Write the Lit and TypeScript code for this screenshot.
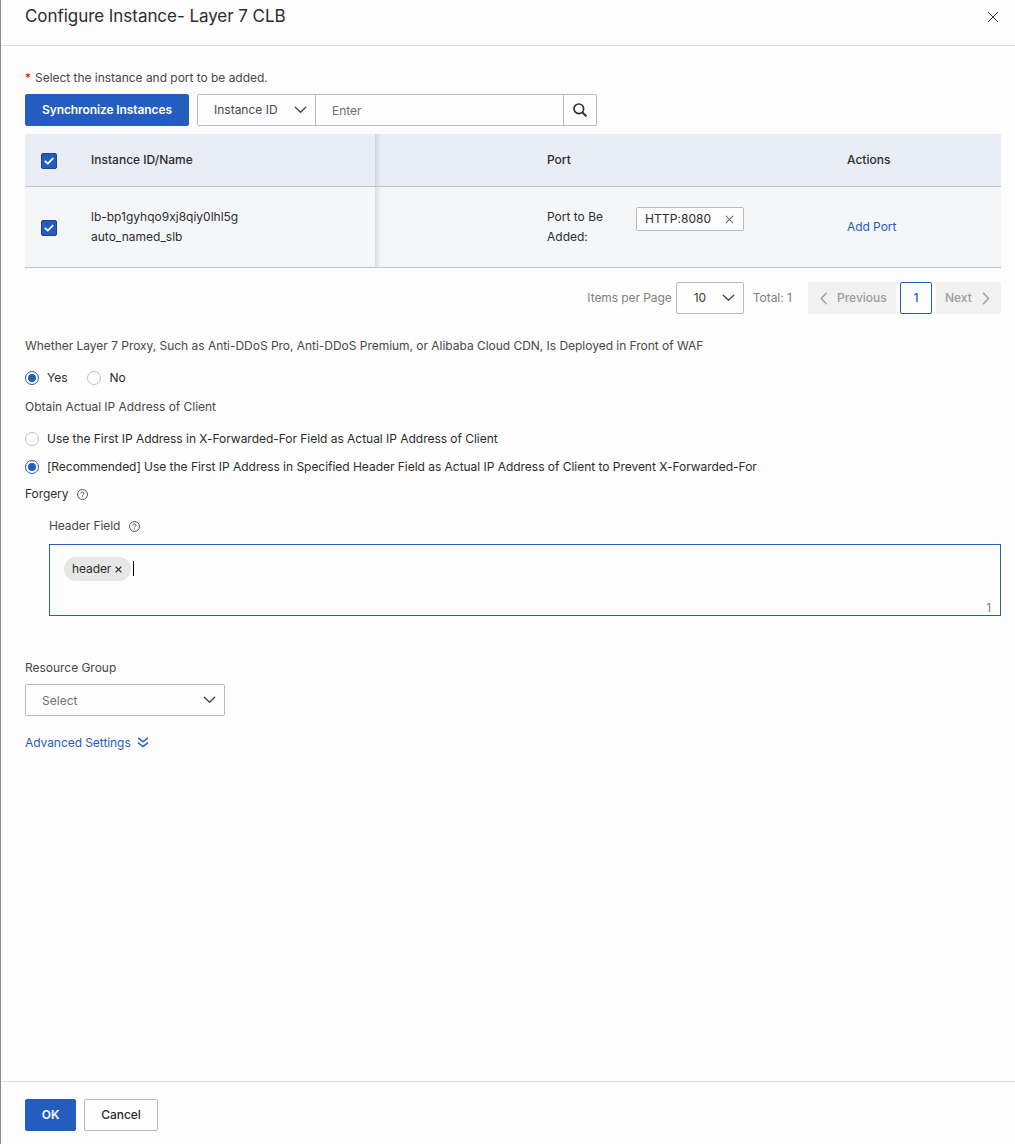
import { LitElement, html, css, svg } from "lit";
import { customElement, property } from "lit/decorators.js";
import { classMap } from "lit/directives/class-map.js";

const chevron = (d: string, w: number, h: number) => html`<svg
  width=${w} height=${h} viewBox="0 0 ${w} ${h}" fill="none"
  stroke="currentColor" stroke-width="1.3" stroke-linecap="round" stroke-linejoin="round"
>${svg`<path d=${d} />`}</svg>`;

const down = () => chevron("M1.3 1.3 6.5 6.3 11.7 1.3", 13, 8);
const left = () => chevron("M6.2 1.3 1.2 6.5 6.2 11.7", 8, 13);
const right = () => chevron("M1.5 1.3 6.5 6.5 1.5 11.7", 8, 13);
const cross = (s: number, w = 1.1) => html`<svg width=${s} height=${s} viewBox="0 0 12 12"
  fill="none" stroke="currentColor" stroke-width=${w}>
  <path d="M1 1 11 11M11 1 1 11" /></svg>`;
const help = () => html`<svg width="11" height="11" viewBox="0 0 11 11" fill="none" stroke="#444" stroke-width=".9">
  <circle cx="5.5" cy="5.5" r="5" />
  <path d="M4 4.5C4 3.5 4.6 3 5.5 3S7 3.5 7 4.3C7 5.3 5.5 5.3 5.5 6.5M5.5 7.3V8.2" /></svg>`;

@customElement("check-box")
class CheckBox extends LitElement {
  static styles = css`
    :host { display: block; width: 16px; height: 16px; }
    .box { box-sizing: border-box; width: 16px; height: 16px; background: #245dbf;
      border: 1px solid #19438c; border-radius: 2px; display: flex; align-items: center; justify-content: center; }
  `;
  render() {
    return html`<div class="box"><svg width="10" height="8" viewBox="0 0 10 8" fill="none" stroke="#fff" stroke-width="1.8">
      <path d="M.8 3.8 3.8 6.6 9.2 1.2" /></svg></div>`;
  }
}

@customElement("radio-item")
class RadioItem extends LitElement {
  @property({ type: Boolean }) checked = false;
  static styles = css`
    :host { display: flex; align-items: center; gap: 8px; height: 20px; color: #2c2c2c; white-space: nowrap; }
    .dot { box-sizing: border-box; width: 14px; height: 14px; border: 1px solid #c0c0c0; border-radius: 50%;
      background: #fff; display: flex; align-items: center; justify-content: center; flex: none; }
    .on { border-color: #2557ad; }
    .on::after { content: ""; width: 8px; height: 8px; border-radius: 50%; background: #245dbf; }
  `;
  render() {
    return html`<span class=${classMap({ dot: true, on: this.checked })}></span><slot></slot>`;
  }
}

@customElement("app-root")
class AppRoot extends LitElement {
  static styles = css`
    * { box-sizing: border-box; }
    :host { display: flex; flex-direction: column; height: 1144px; background: #fdfdfd;
      border-left: 1px solid #8a8a8c; box-sizing: border-box; color: #2c2c2c;
      font: 12px/20px Inter, "Liberation Sans", sans-serif; letter-spacing: -.03px; overflow: hidden; white-space: nowrap; }
    svg { display: block; flex: none; }
    .head { height: 46px; border-bottom: 1px solid #dcdddf; display: flex; justify-content: space-between;
      padding: 4px 16px 0 24px; flex: none; }
    .title { font-size: 17px; line-height: 24px; margin: 0; font-weight: 400; letter-spacing: -.05px; }
    .close { padding-top: 7px; color: #333; }
    .body { flex: 1; padding: 22px 14px 0 24px; display: flex; flex-direction: column; }
    .label { height: 20px; color: #484848; display: flex; align-items: center; }
    .star { color: #e00; width: 10px; }
    .tools { display: flex; gap: 8px; margin-top: 6px; height: 32px; }
    .btn { height: 32px; border-radius: 2px; display: flex; align-items: center; justify-content: center;
      border: 1px solid #b9b9b9; background: #fdfdfd; font-weight: 500; }
    .primary { background: #245dbf; border-color: #245dbf; color: #fff; font-weight: 600; letter-spacing: -.1px; }
    .sync { width: 164px; }
    .search { width: 400px; display: flex; border: 1px solid #b6bac6; border-radius: 2px; }
    .kind { width: 118px; border-right: 1px solid #b6bac6; display: flex; align-items: center;
      justify-content: space-between; padding: 0 8px 0 16px; color: #484848; letter-spacing: 0; }
    .enter { flex: 1; padding: 6px 16px 0; color: #707070; }
    .go { width: 33px; border-left: 1px solid #b6bac6; display: flex; align-items: center; justify-content: center; }
    .row { display: grid; grid-template-columns: 350px 156px 300px 170px; border-bottom: 1px solid #bfc1c6; }
    .thead { margin-top: 8px; height: 53px; background: #e9edf6; font-weight: 500; letter-spacing: 0; }
    .data { height: 81px; background: #f5f6f8; }
    .fixed { display: grid; grid-template-columns: 50px 1fr; align-items: center; padding-left: 16px; letter-spacing: 0; }
    .edge { background: linear-gradient(90deg, rgba(0,0,0,.1), rgba(0,0,0,.03) 4px, transparent 7px); }
    .cell { padding: 0 16px; display: flex; align-items: center; }
    .thead .cell, .thead .name { padding-bottom: 1px; }
    .thead check-box { margin-top: 1px; }
    .data check-box { margin-top: 2px; }
    .port { align-items: flex-start; padding-top: 20px; }
    .portlabel { width: 89px; letter-spacing: 0; }
    .tag { width: 108px; height: 24px; border: 1px solid #b9b9b9; border-radius: 2px; background: #fdfdfd;
      display: flex; align-items: center; justify-content: space-between; padding: 0 9px 0 8px; letter-spacing: .08px; }
    .tag svg { color: #555; }
    .link { color: #1f5bc4; letter-spacing: -.06px; }
    .pager { margin-top: 14px; display: flex; justify-content: flex-end; align-items: center; height: 32px; color: #808080;
      letter-spacing: -.08px; }
    .size { width: 68px; height: 32px; margin: 0 9px 0 4px; border: 1px solid #b9b9b9; border-radius: 2px; color: #3c3c3c;
      display: flex; align-items: center; justify-content: space-between; padding: 0 8px 0 17px; letter-spacing: 0; }
    .total { margin-right: 16px; letter-spacing: 0; }
    .nav { height: 32px; background: #f1f1f1; border-radius: 2px; color: #9b9b9b; font-weight: 500;
      display: flex; align-items: center; letter-spacing: 0; }
    .prev { width: 88px; gap: 9px; padding-left: 12px; }
    .next { width: 65px; gap: 10px; padding-left: 9px; }
    .cur { width: 32px; height: 32px; margin: 0 4px; border: 1px solid #245dbf; border-radius: 2px; color: #245dbf;
      font-weight: 500; display: flex; align-items: center; justify-content: center; }
    .q1 { margin-top: 22px; }
    .yesno { display: flex; gap: 20px; margin-top: 12px; }
    .q2 { margin-top: 9px; }
    .first { margin-top: 12px; }
    .second { margin-top: 8px; }
    .forge { margin-top: 7px; color: #2c2c2c; gap: 9px; }
    .hf { margin: 12px 0 0 24px; gap: 9px; }
    .forge, .hf { letter-spacing: -.08px; }
    .area { margin: 8px 0 0 24px; height: 72px; border: 1px solid #2560bd; padding: 12px 9px 0 14px;
      display: flex; justify-content: space-between; }
    .chips { display: flex; gap: 2px; }
    .chip { width: 67px; height: 24px; border-radius: 12px; background: #e7e7e7; display: flex; align-items: center;
      gap: 4px; padding-left: 8px; letter-spacing: -.1px; }
    .chip svg { margin-top: 1px; }
    .caret { width: 1px; height: 15px; margin-top: 4px; background: #000; }
    .count { align-self: flex-end; color: #808080; line-height: 14px; }
    .rg { margin-top: 42px; }
    .select { margin-top: 6px; width: 200px; height: 32px; border: 1px solid #b9b9b9; border-radius: 2px; color: #707070;
      display: flex; align-items: center; justify-content: space-between; padding: 0 8px 0 16px; letter-spacing: .03px; }
    .select span { padding-top: 2px; }
    .select svg, .kind svg, .size svg { color: #444; }
    .select svg { margin-top: -1px; }
    .adv { margin-top: 17px; display: flex; align-items: center; gap: 6px; }
    .adv svg { margin-top: -1px; }
    .foot { height: 63px; flex: none; border-top: 1px solid #dcdddf; padding: 17px 24px 0; display: flex; gap: 8px; }
    .ok { width: 51px; }
    .cancel { width: 74px; letter-spacing: -.08px; }
  `;
  render() {
    return html`
      <header class="head">
        <h1 class="title">Configure Instance- Layer 7 CLB</h1>
        <span class="close">${cross(12, 1)}</span>
      </header>
      <main class="body">
        <div class="label"><span class="star">*</span><span>Select the instance and port to be added.</span></div>
        <div class="tools">
          <div class="btn primary sync"><span>Synchronize Instances</span></div>
          <div class="search">
            <div class="kind"><span>Instance ID</span>${down()}</div>
            <div class="enter">Enter</div>
            <div class="go"><svg width="14" height="14" viewBox="0 0 14 14" fill="none" stroke="#333" stroke-width="1.7">
              <circle cx="5.8" cy="5.8" r="4.8" /><path d="M9.2 9.2 13.4 13.4" stroke-width="2" /></svg></div>
          </div>
        </div>
        <div class="row thead">
          <div class="fixed"><check-box></check-box><span class="name">Instance ID/Name</span></div>
          <div class="edge"></div>
          <div class="cell">Port</div>
          <div class="cell">Actions</div>
        </div>
        <div class="row data">
          <div class="fixed"><check-box></check-box><span>lb-bp1gyhqo9xj8qiy0lhl5g<br />auto_named_slb</span></div>
          <div class="edge"></div>
          <div class="cell port"><span class="portlabel">Port to Be<br />Added:</span>
            <span class="tag">HTTP:8080 ${cross(9, 1.4)}</span></div>
          <div class="cell link">Add Port</div>
        </div>
        <div class="pager">
          <span>Items per Page</span>
          <div class="size">10 ${down()}</div>
          <span class="total">Total: 1</span>
          <div class="nav prev">${left()}<span>Previous</span></div>
          <div class="cur">1</div>
          <div class="nav next"><span>Next</span>${right()}</div>
        </div>
        <div class="label q1"><span>Whether Layer 7 Proxy, Such as Anti-DDoS Pro, Anti-DDoS Premium, or Alibaba Cloud CDN, Is Deployed in Front of WAF</span></div>
        <div class="yesno"><radio-item checked>Yes</radio-item><radio-item>No</radio-item></div>
        <div class="label q2">Obtain Actual IP Address of Client</div>
        <radio-item class="first">Use the First IP Address in X-Forwarded-For Field as Actual IP Address of Client</radio-item>
        <radio-item class="second" checked>[Recommended] Use the First IP Address in Specified Header Field as Actual IP Address of Client to Prevent X-Forwarded-For</radio-item>
        <div class="label forge">Forgery ${help()}</div>
        <div class="label hf">Header Field ${help()}</div>
        <div class="area">
          <div class="chips"><span class="chip">header ${cross(7, 2.2)}</span><span class="caret"></span></div>
          <span class="count">1</span>
        </div>
        <div class="label rg">Resource Group</div>
        <div class="select"><span>Select</span>${down()}</div>
        <div class="adv link"><span>Advanced Settings</span>
          <svg width="12" height="11" viewBox="0 0 12 11" fill="none" stroke="currentColor" stroke-width="1.4">
            <path d="M1 .8 6 4.8 11 .8M1 5.6 6 9.6 11 5.6" /></svg></div>
      </main>
      <footer class="foot">
        <div class="btn primary ok">OK</div>
        <div class="btn cancel">Cancel</div>
      </footer>`;
  }
}
